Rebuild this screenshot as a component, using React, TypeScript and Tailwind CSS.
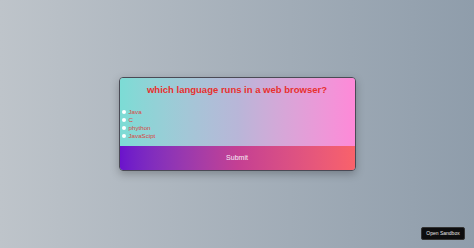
import React from "react";

const options = ["Java", "C", "phython", "JavaScipt"];

export default function App() {
  return (
    <div
      className="relative flex h-[248px] w-full items-center justify-center bg-gradient-to-r from-[#bec4ca] to-[#8f9dab]"
      style={{ fontFamily: '"Liberation Sans", Arial, sans-serif' }}
    >
      <div className="w-[237px] overflow-hidden rounded-[4px] border border-[#4a4a55] shadow-[0_3px_8px_rgba(0,0,0,0.25)]">
        <div className="bg-gradient-to-r from-[#7cdcd5] via-[#b8b6d8] to-[#fe89d8] pb-[6px] pt-[5px]">
          <h1 className="text-center text-[9.5px] font-bold leading-[14px] text-[#e8302e]">
            which language runs in a web browser?
          </h1>
          <ul className="mt-[11px] pl-[2px]">
            {options.map((o) => (
              <li key={o} className="flex h-[8px] items-center gap-[3px] text-[6.2px] leading-[8px] text-[#d9453f]">
                <span className="inline-block h-[4px] w-[4px] rounded-full bg-white" />
                <span>{o}</span>
              </li>
            ))}
          </ul>
        </div>
        <div className="flex h-[24px] items-center justify-center bg-gradient-to-r from-[#6b12cc] via-[#c43f93] to-[#f9626a] text-[7px] text-[#f6eef8]">
          Submit
        </div>
      </div>
      <div className="absolute bottom-[8px] right-[9px] flex h-[13px] w-[44px] items-center justify-center rounded-[2px] border border-[#333] bg-[#0d0d0f] text-[5px] text-[#e8e8e8]">
        Open Sandbox
      </div>
    </div>
  );
}
